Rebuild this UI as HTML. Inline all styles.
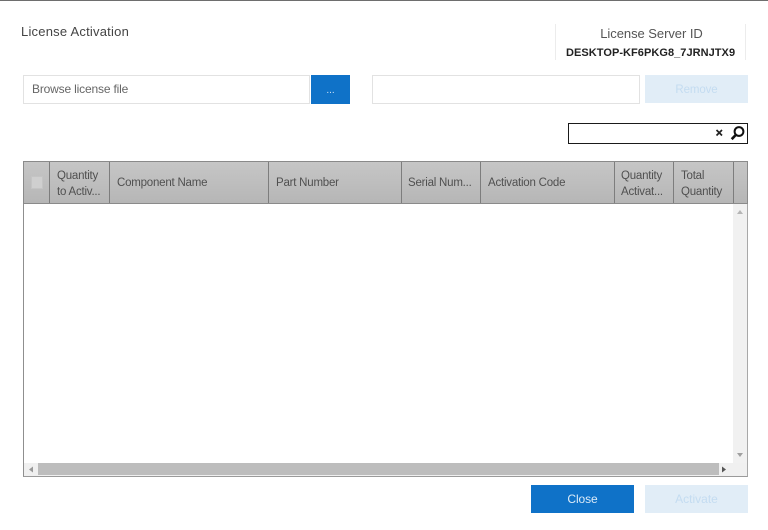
<!DOCTYPE html>
<html>
<head>
<meta charset="utf-8">
<style>
html,body{margin:0;padding:0;background:#fff}
body{position:relative;width:768px;height:530px;overflow:hidden;font-family:"Liberation Sans",sans-serif;color:#555}
div{position:absolute;box-sizing:border-box;white-space:nowrap}
.hc{top:162px;height:41px;border-right:1px solid #7d7d7d;font-size:11.5px;line-height:16px;color:#505050;letter-spacing:-.22px}
.t{position:absolute;left:7px;top:13px}
.t2{position:absolute;left:7px;top:6px}
</style>
</head>
<body>
<div style="left:0;top:0;width:768px;height:1px;background:#6e6e6e"></div>

<div style="left:21px;top:24px;font-size:13px;line-height:16px;color:#444;letter-spacing:.22px">License Activation</div>

<div style="left:555px;top:24px;width:191px;height:36px;border-left:1px solid #ececec;border-right:1px solid #ececec"></div>
<div style="left:555px;top:26px;width:193px;text-align:center;font-size:13px;line-height:16px;color:#555;letter-spacing:-.05px">License Server ID</div>
<div style="left:566px;top:46px;font-size:11px;line-height:14px;font-weight:bold;color:#222;letter-spacing:.05px">DESKTOP-KF6PKG8_7JRNJTX9</div>

<div style="left:23px;top:75px;width:287px;height:29px;border:1px solid #e2e2e2;background:#fff"></div>
<div style="left:32px;top:82px;font-size:12px;line-height:15px;color:#666;letter-spacing:-.17px">Browse license file</div>
<div style="left:311px;top:75px;width:39px;height:29px;background:#0f72c8;color:#cfe3f5;font-size:10px;line-height:31px;text-align:center">...</div>

<div style="left:372px;top:75px;width:268px;height:29px;border:1px solid #e2e2e2;background:#fff"></div>
<div style="left:645px;top:75px;width:103px;height:28px;background:#e1edf7;color:#c4dcf1;font-size:11.5px;line-height:30px;text-align:center;letter-spacing:-.1px">Remove</div>

<div style="left:568px;top:123px;width:180px;height:21px;border:1px solid #1a1a1a;background:#fff"></div>
<svg style="position:absolute;left:712px;top:124px" width="36" height="19" viewBox="0 0 36 19">
<path d="M4.5 6l5.5 5.5M10 6l-5.5 5.5" stroke="#222" stroke-width="1.7" fill="none"/>
<circle cx="27" cy="7.5" r="4.4" stroke="#111" stroke-width="2" fill="none"/>
<path d="M23.7 11l-4 4.2" stroke="#111" stroke-width="2.6" fill="none"/>
</svg>

<!-- grid -->
<div style="left:23px;top:161px;width:725px;height:316px;border:1px solid #8f8f8f;border-right-color:#a8a8a8;border-bottom-color:#9a9a9a;background:#fff"></div>
<div style="left:23px;top:161px;width:725px;height:43px;background:linear-gradient(#c6c6c6,#b6b6b6);border:1px solid #8a8a8a"></div>
<div class="hc" style="left:24px;width:26px"></div>
<div style="left:31px;top:176px;width:12px;height:13px;background:#cfcfcf;border:1px solid #c4c4c4"></div>
<div class="hc" style="left:50px;width:60px"><span class="t2">Quantity<br>to Activ...</span></div>
<div class="hc" style="left:110px;width:159px"><span class="t">Component Name</span></div>
<div class="hc" style="left:269px;width:133px"><span class="t">Part Number</span></div>
<div class="hc" style="left:402px;width:79px"><span class="t" style="left:6px">Serial Num...</span></div>
<div class="hc" style="left:481px;width:134px"><span class="t">Activation Code</span></div>
<div class="hc" style="left:615px;width:59px"><span class="t2" style="left:6px">Quantity<br>Activat...</span></div>
<div class="hc" style="left:674px;width:60px"><span class="t2" style="left:7px">Total<br>Quantity</span></div>

<!-- vertical scrollbar -->
<div style="left:733px;top:204px;width:14px;height:259px;background:#f1f1f1"></div>
<svg style="position:absolute;left:733px;top:204px" width="14" height="259" viewBox="0 0 14 259">
<path d="M4 10l3-4 3 4z" fill="#b5b5b5"/>
<path d="M4 249l3 4 3-4z" fill="#a0a0a0"/>
</svg>

<!-- horizontal scrollbar -->
<div style="left:24px;top:463px;width:723px;height:13px;background:#f0f0f0"></div>
<div style="left:38px;top:463px;width:681px;height:12px;background:#bdbdbd"></div>
<svg style="position:absolute;left:24px;top:463px" width="723" height="13" viewBox="0 0 723 13">
<path d="M9 3.5l-4 3 4 3z" fill="#999"/>
<path d="M698 3.5l4 3-4 3z" fill="#555"/>
</svg>

<div style="left:531px;top:485px;width:103px;height:28px;background:#0f72c8;color:#dcebf8;font-size:12px;line-height:29px;text-align:center;letter-spacing:-.1px">Close</div>
<div style="left:645px;top:485px;width:103px;height:28px;background:#e1edf7;color:#c4dcf1;font-size:12px;line-height:29px;text-align:center;letter-spacing:0">Activate</div>
</body>
</html>
